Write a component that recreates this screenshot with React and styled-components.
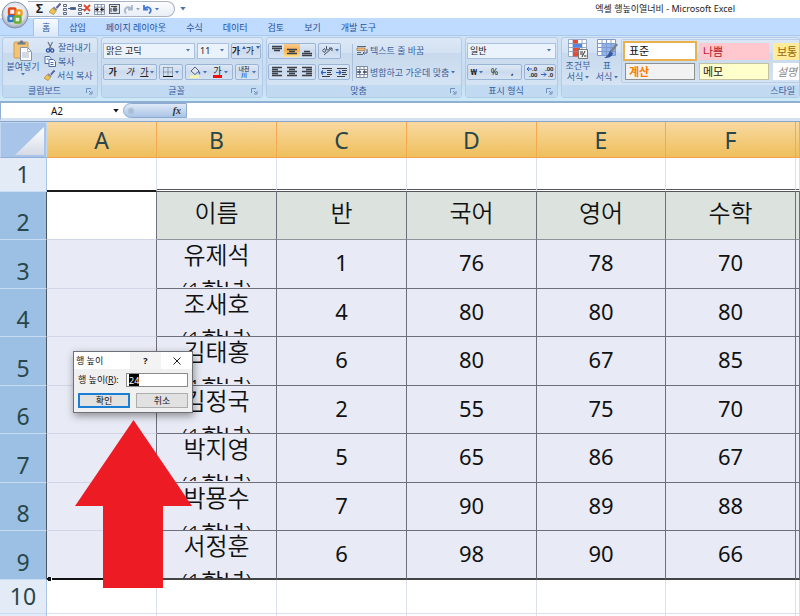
import React, { useEffect, useRef } from "react"
import styled, { createGlobalStyle } from "styled-components"

const GlobalStyle = createGlobalStyle`
  *{ box-sizing: border-box; }
  body{
    margin: 0;
    background: #fff;
    overflow: hidden;
    font-family: "Noto Sans", "Noto Sans CJK KR", sans-serif;
  }
  button, input, select{
    margin: 0;
    padding: 0;
    border: 0;
    background: none;
    font-family: inherit;
    color: inherit;
  }
`;

const Window = styled.div`
  display: flex;
  flex-direction: column;
  height: 100vh;
  font-size: 9px;
  line-height: 12px;
  color: #3a5f9c;
`;

/* title bar and quick access */
const TitleBar = styled.header`
  position: relative;
  display: flex;
  align-items: center;
  height: 18px;
  padding-left: 28px;
`;

const Orb = styled.button`
  position: absolute;
  left: 1px;
  top: 1px;
  width: 28px;
  height: 28px;
  z-index: 2;
  svg{ display: block; }
`;

const QuickAccess = styled.div`
  display: flex;
  align-items: center;
  gap: 2px;
  width: 147px;
  height: 16px;
  padding-left: 5px;
  background: linear-gradient(#fbfcfe, #e9eff7);
  border: 1px solid #a9b3c2;
  border-left: 0;
  border-radius: 0 8px 8px 0;
`;

const Title = styled.h1`
  flex: 1;
  margin: 0;
  padding-right: 65px;
  text-align: right;
  font-size: 9px;
  font-weight: 400;
  color: #222;
`;

const IconButton = styled.button`
  display: flex;
  align-items: center;
  justify-content: center;
  gap: 2px;
  flex: ${({ $grow }) => ($grow ? 1 : "none")};
  min-width: 13px;
  height: 13px;
  font-size: ${({ $large }) => ($large ? "12px" : "9px")};
  line-height: 12px;
  color: #222;
  background: ${({ $active }) => ($active ? "linear-gradient(#f9c98a, #f8b250 50%, #fde08a)" : "none")};
  svg{ display: block; flex: none; }
`;

const Customize = styled(IconButton)`
  margin-left: 1px;
`;

/* tabs */
const Tabs = styled.nav`
  display: flex;
  height: 18px;
  padding-left: 33px;
  background: #bfdbff;
  border-bottom: 1px solid #a8c8ee;
`;

const Tab = styled.button`
  height: 18px;
  padding: 0 ${({ $active }) => ($active ? "8px" : "10px")};
  font-size: 9px;
  color: #2a5096;
  border-radius: 2px 2px 0 0;
  background: ${({ $active }) => ($active ? "linear-gradient(#f6faff, #dbe8f7)" : "none")};
  border: solid ${({ $active }) => ($active ? "#a3c3ea" : "transparent")};
  border-width: ${({ $active }) => ($active ? "1px 1px 0" : "0")};
`;

/* ribbon */
const Ribbon = styled.section`
  display: flex;
  gap: 3px;
  height: 67px;
  padding: 1px 0 3px 2px;
  background: linear-gradient(#cfe2f6, #c5dcf3 70%, #cdeaf8);
  border-bottom: 2px solid #8fafd3;
`;

const GroupBox = styled.div`
  display: flex;
  flex-direction: column;
  flex: ${({ $width }) => ($width ? "none" : "1")};
  width: ${({ $width }) => ($width ? $width + "px" : "auto")};
  min-width: 0;
  overflow: hidden;
  border: 1px solid #b3cbe6;
  border-radius: 3px;
  background: linear-gradient(#dce8f6, #d3e1f2 25%, #c8d9ed 26%, #d9e8f6);
`;

const GroupBody = styled.div`
  display: flex;
  flex: 1;
  min-height: 0;
  gap: ${({ $gap }) => $gap || 0}px;
  padding: ${({ $pad }) => $pad || "2px 1px"};
`;

const GroupLabel = styled.div`
  display: flex;
  justify-content: center;
  align-items: center;
  height: 12px;
  padding-right: 4px;
  background: #c1d9f1;
  span{ flex: 1; text-align: ${({ $align }) => $align || "center"}; }
`;

const Stack = styled.div`
  display: flex;
  flex-direction: column;
  justify-content: space-around;
`;

const Line = styled.div`
  display: flex;
  gap: 2px;
`;

const BigButton = styled.button`
  display: flex;
  flex: none;
  flex-direction: column;
  align-items: center;
  width: ${({ $width }) => $width}px;
  font-size: 9px;
  line-height: 10px;
  color: #3a5f9c;
  svg{ display: block; flex: none; }
  span{ white-space: nowrap; display: flex; align-items: center; gap: 2px; margin-top: 1px; }
`;

const TextButton = styled.button`
  display: flex;
  align-items: center;
  gap: 2px;
  height: 15px;
  font-size: 9px;
  white-space: nowrap;
  color: #3a5f9c;
  svg{ flex: none; }
`;

const ButtonSet = styled.div`
  display: flex;
  align-items: center;
  width: ${({ $width }) => $width}px;
  height: 16px;
  border: 1px solid #9ab4d6;
  border-radius: 2px;
  background: linear-gradient(#dfe9f6, #cbdaee 50%, #d6e3f3);
`;

const SelectBox = styled.label`
  display: flex;
  align-items: center;
  width: ${({ $width }) => $width}px;
  height: 16px;
  padding: 0 4px 0 2px;
  border: 1px solid #abc1de;
  background: #eaf2fb;
  color: #222;
  select{ flex: 1; min-width: 0; appearance: none; font-size: 9px; line-height: 13px; }
  svg{ flex: none; }
`;

const Divider = styled.div`
  width: 1px;
  margin: 4px 3px 2px 2px;
  background: #a9c0dd;
`;

const Gallery = styled.div`
  display: grid;
  grid-template-columns: repeat(auto-fill, 74px);
  grid-template-rows: 20px 20px;
  grid-auto-flow: column;
  flex: 1;
  min-width: 225px;
  height: 44px;
  padding: 1px;
  border: 1px solid #b9cfe9;
  border-radius: 2px;
`;

const StyleCell = styled.button`
  display: flex;
  align-items: center;
  margin: ${({ $active }) => ($active ? "0" : "2px 2px 1px")};
  padding-left: ${({ $active }) => ($active ? "4px" : "3px")};
  font-size: 11px;
  line-height: 14px;
  color: ${({ $color }) => $color};
  background: ${({ $bg }) => $bg};
  font-weight: ${({ $bold }) => ($bold ? 700 : 400)};
  font-style: ${({ $italic }) => ($italic ? "italic" : "normal")};
  border: ${({ $active }) => ($active ? "2px" : "1px")} solid ${({ $line, $bg }) => $line || $bg};
`;

const FontColor = styled.span`
  line-height: 9px;
  border-bottom: 3px solid #ee1111;
`;

const Ruby = styled.span`
  display: flex;
  flex-direction: column;
  align-items: center;
  font-size: 6px;
  line-height: 6px;
  white-space: nowrap;
  em{ font-style: normal; font-weight: 700; color: #2c52c2; }
`;

/* formula bar */
const FormulaBar = styled.div`
  display: flex;
  height: 18px;
  background: #fff;
  border-bottom: 3px solid #d3e1f0;
  border-left: 1px solid #8fafd3;
`;

const NameBox = styled.label`
  display: flex;
  align-items: center;
  width: 122px;
  padding-right: 4px;
  color: #111;
  input{ flex: 1; min-width: 0; text-align: center; font-size: 10px; line-height: 14px; }
`;

const FxHandle = styled.button`
  width: 64px;
  padding-right: 5px;
  border: 1px solid #8eabcf;
  border-radius: 8px 0 0 8px;
  background: radial-gradient(circle at 7px 7px, #a9bdd6 2px, transparent 4px), linear-gradient(#dfe9f6, #a9c4e6);
  text-align: right;
  font: italic 700 10px/13px "Liberation Serif", serif;
  color: #333;
`;

const FormulaInput = styled.input`
  flex: 1;
  min-width: 0;
  font-size: 10px;
`;

/* sheet */
const SheetArea = styled.main`
  position: relative;
  flex: 1;
  min-height: 0;
  overflow: hidden;
  border-top: 1px solid #85a5cb;
`;

const Grid = styled.table`
  width: 100%;
  table-layout: fixed;
  border-collapse: separate;
  border-spacing: 0;
  th, td{ padding: 0; }
`;

const Col = styled.col`
  width: ${({ $width }) => ($width ? $width + "px" : "auto")};
`;

const Corner = styled.th`
  height: 36px;
  background: #a9c4e9;
  border: 1px solid #c3d6f0;
  border-bottom-color: #8fafd8;
  svg{ display: block; margin-left: auto; }
`;

const ColumnHead = styled.th`
  height: 36px;
  font-size: 23px;
  line-height: 32px;
  font-weight: 400;
  color: #29464a;
  background: linear-gradient(#f8d9a1, #efbf5c);
  border-right: 1px solid #f4a950;
  border-bottom: 1px solid #f4a24a;
`;

const RowHead = styled.th`
  vertical-align: bottom;
  font-size: 23px;
  line-height: 33px;
  font-weight: 400;
  color: #29464a;
  background: ${({ $selected }) => ($selected ? "#9cc0e4" : "#e3ebf7")};
  border-right: 1px solid ${({ $selected }) => ($selected ? "#4d5668" : "#a9c3e4")};
  border-bottom: 1px solid #c8dcf2;
`;

const Row = styled.tr`
  height: ${({ $height }) => $height}px;
`;

const BlankCell = styled.td`
  border-right: 1px solid #dcdff0;
  border-bottom: 1px solid #d8dfee;
`;

const TopEdge = styled.td`
  border-right: 1px solid #dcdff0;
  border-bottom: ${({ $heavy }) => ($heavy ? "2px solid #1c1a1c" : "3px double #55555c")};
`;

const DataCell = styled.td`
  vertical-align: top;
  text-align: center;
  font-size: 22px;
  line-height: 44px;
  color: #111;
  background: #e8ebf5;
  border-right: 1px solid #6d6f7a;
  border-bottom: ${({ $last }) => ($last ? "2px solid #444" : "1px solid #6d6f7a")};
`;

const SideCell = styled(DataCell)`
  background: ${({ $current }) => ($current ? "#fff" : "#e8ebf5")};
  border-bottom-color: ${({ $last }) => ($last ? "#111" : "#d0d5e8")};
`;

const SubjectCell = styled.th`
  vertical-align: top;
  font-size: 24px;
  line-height: 42px;
  font-weight: 350;
  color: #111;
  background: #dce3de;
  border-right: 1px solid #6d6f7a;
  border-bottom: 1px solid #8f9298;
`;

const Clip = styled.div`
  height: 47px;
  overflow: hidden;
  font-size: 24px;
  line-height: 30px;
  font-weight: 350;
`;

const Grade = styled.div`
  line-height: 42px;
`;

/* row height dialog */
const DialogBox = styled.form`
  position: absolute;
  left: 73px;
  top: 229px;
  width: 120px;
  background: #f0f0f0;
  border: 1px solid #6f7177;
  box-shadow: 1px 3px 8px rgba(0,0,0,0.4);
  color: #111;
`;

const DialogTitle = styled.div`
  display: flex;
  align-items: center;
  height: 17px;
  padding-left: 2px;
  background: #fff;
  span{ flex: 1; }
`;

const DialogTool = styled.button`
  display: flex;
  align-items: center;
  justify-content: center;
  width: 31px;
  height: 17px;
  font-size: 9px;
  font-weight: 700;
  background: ${({ $shade }) => ($shade ? "#f3f3f3" : "#fff")};
`;

const Field = styled.label`
  display: flex;
  align-items: center;
  justify-content: space-between;
  padding: 4px 4px 0;
  white-space: nowrap;
  input{
    width: 62px;
    height: 14px;
    padding-left: 2px;
    border: 1px solid #8b8b8b;
    background: #fff;
    font-size: 9px;
    outline: 0;
  }
  input::selection{ background: #000; color: #fff; }
`;

const Actions = styled.div`
  display: grid;
  grid-template-columns: 1fr 1fr;
  gap: 6px;
  padding: 6px 4px 4px;
`;

const ActionButton = styled.button`
  height: 15px;
  font-size: 9px;
  line-height: 11px;
  background: #e1e1e1;
  border: ${({ $primary }) => ($primary ? "2px solid #1c7fd6" : "1px solid #adadad")};
`;

const Arrow = styled.svg`
  position: absolute;
  left: 75px;
  top: 298px;
`;

const Handle = styled.span`
  position: absolute;
  left: 48px;
  top: 455px;
  width: 4px;
  height: 4px;
  background: #111;
  border: solid #fff;
  border-width: 0 1px 0 0;
`;

const Caret = ({ color = "#4a72b0", big }) => (
  <svg width={big ? 6 : 4} height={big ? 4 : 3} viewBox="0 0 4 3"><path d="M0 0h4L2 2.6z" fill={color} /></svg>
)

const SizeMark = ({ down }) => (
  <svg width="4" height="12" viewBox="0 0 4 12"><path d={down ? "M0 1h4L2 4z" : "M0 4h4L2 1z"} fill="#3465b8" /></svg>
)

const Launcher = () => (
  <svg width="7" height="7" viewBox="0 0 7 7"><path d="M.5 5V.5H5M3 3l2.5 2.5M6 3v3H3" fill="none" stroke="#6f8fbd" /></svg>
)

const Brush = ({ size = 12 }) => (
  <svg width={size} height={size} viewBox="0 0 12 12">
    <path d="M11.5.5L7.5 5" stroke="#5b5fa0" strokeWidth="2" />
    <path d="M5 3.5l3.5 3L7 8 3.5 5z" fill="#8f8a9c" />
    <path d="M3.5 5L7 8.5 4.5 11.5 0 9z" fill="#eec64e" stroke="#9a7524" strokeWidth=".6" />
  </svg>
)

const OfficeLogo = () => (
  <svg width="28" height="28" viewBox="0 0 28 28">
    <defs>
      <radialGradient id="orb" cx="50%" cy="40%" r="60%">
        <stop offset="0" stopColor="#fff" /><stop offset=".65" stopColor="#dfe3ea" /><stop offset="1" stopColor="#98a3b5" />
      </radialGradient>
    </defs>
    <circle cx="14" cy="14" r="13" fill="url(#orb)" stroke="#8492a8" />
    <g fill="none" strokeWidth="2.4">
      <rect x="8" y="7.5" width="6.5" height="6.5" rx="1" stroke="#e0491c" />
      <rect x="15.5" y="9.5" width="5" height="5" rx="1" stroke="#f2a01e" />
      <rect x="7.5" y="15" width="5" height="5" rx="1" stroke="#2f76c4" />
      <rect x="13.5" y="15.5" width="6" height="6" rx="1" stroke="#6cae2e" />
    </g>
  </svg>
)

const Clipboard = () => (
  <svg width="20" height="21" viewBox="0 0 20 21">
    <rect x="1" y="2" width="14" height="16" rx="1" fill="#f2c473" stroke="#d09c4c" />
    <path d="M4.5 4.5V2.5h2l1-2h2l1 2h2v2z" fill="#6f7a8c" />
    <path d="M7.5 7.5h7l4 4v9h-11z" fill="#fdfdff" stroke="#8895ac" />
    <path d="M14.5 7.5v4h4M9 13h7M9 15h7M9 17h7" fill="none" stroke="#aab5c8" />
  </svg>
)

const Scissors = () => (
  <svg width="12" height="12" viewBox="0 0 12 12" fill="none">
    <path d="M4 1l3.5 7M8.5 1L5 8" stroke="#6c7688" strokeWidth="1.2" />
    <circle cx="4" cy="9.5" r="1.6" stroke="#2d50a0" strokeWidth="1.3" /><circle cx="8.2" cy="9.5" r="1.6" stroke="#2d50a0" strokeWidth="1.3" />
  </svg>
)

const Pages = () => (
  <svg width="12" height="12" viewBox="0 0 12 12" fill="#fff" stroke="#4b6ba8">
    <path d="M1 1.5h4.5l1.5 2v5H1z" /><path d="M5 4.5h4.5l2 2v5H5z" /><path d="M6.5 7.5h3M6.5 9.5h3M2.5 4h2" />
  </svg>
)

const MergeCells = ({ size = 10, color }) => (
  <svg width={size} height={size} viewBox="0 0 12 12" fill="none">
    <path d="M.5.5h11v11H.5zM.5 3.5h11M.5 8.5h11M4 .5v3M8 .5v3M4 8.5v3M8 8.5v3" fill="#fff" stroke="#7d8ba5" />
    <path d="M1 6h3M11 6H8M3 4.5L4.5 6 3 7.5M9 4.5L7.5 6 9 7.5" stroke={color} strokeWidth="1.4" />
  </svg>
)

const RowInsert = () => (
  <svg width="13" height="11" viewBox="0 0 13 11" fill="none" stroke="#5d6a80">
    <path d="M.5.5h3v2h-3zM.5 4.5h3v2h-3zM.5 8.5h3v2h-3z" /><path d="M5 4.5h2" stroke="#345fa8" /><path d="M7.5 3.5h5v2h-5z" fill="#345fa8" />
  </svg>
)

const RowDelete = () => (
  <svg width="13" height="11" viewBox="0 0 13 11" fill="none" stroke="#5d6a80">
    <path d="M.5.5h3v2h-3zM.5 4.5h3v2h-3zM.5 8.5h3v2h-3zM4 5.5h3M8 9.5h3" /><path d="M6 1l6 6M12 1L6 7" stroke="#e2452a" strokeWidth="1.8" />
  </svg>
)

const Camera = () => (
  <svg width="11" height="10" viewBox="0 0 11 10">
    <rect x=".5" y=".5" width="10" height="9" fill="#dfe3ea" stroke="#555e70" /><circle cx="6" cy="5.5" r="2.3" fill="#59616f" /><path d="M2 2.5h6M2 4v4" stroke="#444" />
  </svg>
)

const Turn = ({ redo }) => (
  <svg width="11" height="11" viewBox="0 0 11 11" fill="none" stroke={redo ? "#a9b6cb" : "#3f78d8"} strokeWidth="1.8">
    {redo ? <path d="M3 9.5C0 5 4 1.5 8 4.5M9 1v4.5H5" /> : <path d="M7 9.5C11 6 7 1 2.5 4.5M2 1v4.5h4" />}
  </svg>
)

const bars = {
  top: "M1 1.5h10M1 3.5h10M3 5.5h6",
  middle: "M1 4.5h10M3 6.5h6M1 8.5h10",
  bottom: "M3 6.5h6M1 8.5h10M1 10.5h10",
  left: "M1 1.5h10M1 3.5h6M1 5.5h10M1 7.5h6M1 9.5h10",
  center: "M1 1.5h10M3 3.5h6M1 5.5h10M3 7.5h6M1 9.5h10",
  right: "M1 1.5h10M5 3.5h6M1 5.5h10M5 7.5h6M1 9.5h10",
}

const Bars = ({ kind }) => (
  <svg width="12" height="12" viewBox="0 0 12 12"><path d={bars[kind]} stroke="#3b3f48" strokeWidth="1.4" /></svg>
)

const Indent = ({ out }) => (
  <svg width="12" height="11" viewBox="0 0 12 11" fill="none">
    <path d="M1 1.5h10M6 3.5h5M6 5.5h4M6 7.5h5M1 9.5h8" stroke="#3b3f48" strokeWidth="1.2" />
    <path d={out ? "M5 5.5H0M2 3.5l-2 2 2 2" : "M0 5.5h5M3 3.5l2 2-2 2"} stroke="#2c62c2" strokeWidth="1.2" />
  </svg>
)

const Slanted = () => (
  <svg width="12" height="11" viewBox="0 0 12 11" fill="none" stroke="#4c5468">
    <path d="M3 10L11 3M11 6V3H8" /><path d="M1.5 5.5l2-2L5 6 3 7.5zM5.5 1v3.5l2 .5L9 3" />
  </svg>
)

const Wrap = () => (
  <svg width="12" height="11" viewBox="0 0 12 11" fill="none">
    <path d="M1 1.5h9M1 9.5h6M1 7.5h4" stroke="#5c6679" /><path d="M1 3h8v2.5H1z" fill="#f3c08a" stroke="#a56c36" strokeWidth=".7" /><path d="M11 4v4H7M8.5 6.5L7 8l1.5 1.5" stroke="#4f5f80" />
  </svg>
)

const Borders = () => (
  <svg width="10" height="10" viewBox="0 0 10 10" fill="none" stroke="#5b6880">
    <path d="M.5.5h9M.5 5h9M.5.5v9M5 .5v9M9.5.5v9" strokeDasharray="1 1" /><path d="M0 9.5h10" stroke="#111" />
  </svg>
)

const Bucket = () => (
  <svg width="12" height="12" viewBox="0 0 12 12">
    <path d="M2 5l4-4 4 4-4 3.5z" fill="#dfe6f0" stroke="#56617a" /><path d="M9.5 5q2.5 1 1.5 3.5Q9 8 9.5 5z" fill="#3f6dc0" /><path d="M1 9.5h9V12H1z" fill="#f7f5a8" />
  </svg>
)

const Decimals = ({ less }) => (
  <svg width="13" height="12" viewBox="0 0 13 12">
    <text x={less ? 4 : 6} y="5" fontSize="6" fontWeight="700" fill="#333">{less ? ".00" : ".0"}</text>
    <text x={less ? 7 : 3} y="11" fontSize="6" fontWeight="700" fill="#333">{less ? ".0" : ".00"}</text>
    <path d={less ? "M0 8.5h5M3 6.5l2 2-2 2" : "M6 3H1M3 1L1 3l2 2"} fill="none" stroke="#2c62c2" />
  </svg>
)

const Conditional = () => (
  <svg width="21" height="21" viewBox="0 0 21 21">
    <path d="M.5.5h18v17H.5zM.5 4.5h18M.5 8.5h18M.5 12.5h18M5 .5v17M14 .5v17" fill="#fff" stroke="#97a9c8" />
    <path d="M5 1h5v3.5H5zM5 13h5v4.5H5z" fill="#e64b35" /><path d="M5 5h9v3.5H5z" fill="#5a85dc" /><path d="M5 9h7v3.5H5z" fill="#e64b35" />
    <path d="M10.5 10.5h9v9h-9z" fill="#f2f2f2" stroke="#777" /><path d="M12 13h3M12 15h3M17 12l-3 6M16 17h2.5" stroke="#333" />
  </svg>
)

const TableBrush = () => (
  <svg width="21" height="21" viewBox="0 0 21 21">
    <path d="M.5.5h18v16H.5z" fill="#fff" /><path d="M5 5h13.5v11.5H5z" fill="#8fb4ee" />
    <path d="M.5.5h18v16H.5zM.5 4.5h18M.5 8.5h18M.5 12.5h18M5 .5v16M9.5.5v16M14 .5v16" fill="none" stroke="#7f9acb" />
    <path d="M20 5l-7 9" stroke="#7c7f8a" strokeWidth="2.5" /><path d="M13 12l3 2.5q-2 5-9 4.5 4-2 6-7z" fill="#35589e" />
  </svg>
)

const Group = ({ label, width, align, launcher = true, gap, pad, children }) => (
  <GroupBox $width={width}>
    <GroupBody $gap={gap} $pad={pad}>{children}</GroupBody>
    <GroupLabel $align={align}><span>{label}</span>{launcher && <Launcher />}</GroupLabel>
  </GroupBox>
)

const tabs = ["홈", "삽입", "페이지 레이아웃", "수식", "데이터", "검토", "보기", "개발 도구"]

const cellStyles = [
  { name: "표준", color: "#111", bg: "#fff", line: "#eab04e", active: true },
  { name: "계산", color: "#fa7d00", bg: "#f2f2f2", line: "#8f8f8f", bold: true },
  { name: "나쁨", color: "#b0122c", bg: "#ffc7ce" },
  { name: "메모", color: "#222", bg: "#ffffcc", line: "#c3c3a4" },
  { name: "보통", color: "#9c6500", bg: "#ffeb9c" },
  { name: "설명", color: "#8a8a8a", bg: "#fff", italic: true },
]

const columns = ["A", "B", "C", "D", "E", "F"]
const widths = [47, 110, 120, 130, 130, 129, 130, 0]
const subjects = ["이름", "반", "국어", "영어", "수학"]

const students = [
  ["유제석", 1, 76, 78, 70],
  ["조새호", 4, 80, 80, 80],
  ["김태홍", 6, 80, 67, 85],
  ["김정국", 2, 55, 75, 70],
  ["박지영", 5, 65, 86, 67],
  ["박묭수", 7, 90, 89, 88],
  ["서정훈", 6, 98, 90, 66],
]

const RibbonBar = () => (
  <Ribbon>
    <Group label="클립보드" width={96} gap={4} pad="2px 3px">
      <BigButton $width={34}><Clipboard /><span>붙여넣기</span><span><Caret /></span></BigButton>
      <Stack>
        <TextButton><Scissors />잘라내기</TextButton>
        <TextButton><Pages />복사</TextButton>
        <TextButton><Brush size={11} />서식 복사</TextButton>
      </Stack>
    </Group>
    <Group label="글꼴" width={162}>
      <Stack>
        <Line>
          <SelectBox $width={92}><select aria-label="글꼴"><option>맑은 고딕</option></select><Caret /></SelectBox>
          <SelectBox $width={32}><select aria-label="글꼴 크기"><option>11</option></select><Caret /></SelectBox>
          <ButtonSet $width={30}>
            <IconButton $grow><b>가</b><SizeMark /></IconButton>
            <IconButton $grow>가<SizeMark down /></IconButton>
          </ButtonSet>
        </Line>
        <Line>
          <ButtonSet $width={54}>
            <IconButton $grow><b>가</b></IconButton>
            <IconButton $grow><i>가</i></IconButton>
            <IconButton $grow><u>가</u><Caret /></IconButton>
          </ButtonSet>
          <ButtonSet $width={24}><IconButton $grow><Borders /><Caret /></IconButton></ButtonSet>
          <ButtonSet $width={48}>
            <IconButton $grow><Bucket /><Caret /></IconButton>
            <IconButton $grow><FontColor>가</FontColor><Caret /></IconButton>
          </ButtonSet>
          <ButtonSet $width={24}><IconButton $grow><Ruby>내천<em>川</em></Ruby><Caret /></IconButton></ButtonSet>
        </Line>
      </Stack>
    </Group>
    <Group label="맞춤" width={196}>
      <Stack>
        <Line>
          <ButtonSet $width={48}>
            <IconButton $grow><Bars kind="top" /></IconButton>
            <IconButton $grow $active><Bars kind="middle" /></IconButton>
            <IconButton $grow><Bars kind="bottom" /></IconButton>
          </ButtonSet>
          <ButtonSet $width={23}><IconButton $grow><Slanted /><Caret /></IconButton></ButtonSet>
        </Line>
        <Line>
          <ButtonSet $width={48}>
            <IconButton $grow><Bars kind="left" /></IconButton>
            <IconButton $grow><Bars kind="center" /></IconButton>
            <IconButton $grow><Bars kind="right" /></IconButton>
          </ButtonSet>
          <ButtonSet $width={32}>
            <IconButton $grow><Indent out /></IconButton>
            <IconButton $grow><Indent /></IconButton>
          </ButtonSet>
        </Line>
      </Stack>
      <Divider />
      <Stack>
        <TextButton><Wrap />텍스트 줄 바꿈</TextButton>
        <TextButton><MergeCells size={12} color="#4a5568" />병합하고 가운데 맞춤<Caret /></TextButton>
      </Stack>
    </Group>
    <Group label="표시 형식" width={93}>
      <Stack>
        <SelectBox $width={89}><select aria-label="표시 형식"><option>일반</option></select><Caret /></SelectBox>
        <Line>
          <ButtonSet $width={55}>
            <IconButton $grow><b>₩</b><Caret /></IconButton>
            <IconButton $grow>%</IconButton>
            <IconButton $grow><b>,</b></IconButton>
          </ButtonSet>
          <ButtonSet $width={32}>
            <IconButton $grow><Decimals /></IconButton>
            <IconButton $grow><Decimals less /></IconButton>
          </ButtonSet>
        </Line>
      </Stack>
    </Group>
    <Group label="스타일" align="right" launcher={false} pad="1px 0 1px 1px">
      <BigButton $width={30}><Conditional /><span>조건부</span><span>서식 <Caret /></span></BigButton>
      <BigButton $width={28}><TableBrush /><span>표</span><span>서식 <Caret /></span></BigButton>
      <Gallery>
        {cellStyles.map(s => (
          <StyleCell key={s.name} $color={s.color} $bg={s.bg} $line={s.line} $bold={s.bold} $italic={s.italic} $active={s.active}>
            {s.name}
          </StyleCell>
        ))}
      </Gallery>
    </Group>
  </Ribbon>
)

const RowHeightDialog = () => {
  const input = useRef(null)
  useEffect(() => {
    input.current.focus()
    input.current.select()
  }, [])
  return (
    <DialogBox role="dialog" aria-label="행 높이" onSubmit={e => e.preventDefault()}>
      <DialogTitle>
        <span>행 높이</span>
        <DialogTool type="button" $shade>?</DialogTool>
        <DialogTool type="button" aria-label="닫기">
          <svg width="8" height="8" viewBox="0 0 8 8"><path d="M.5.5l7 7M7.5.5l-7 7" stroke="#222" /></svg>
        </DialogTool>
      </DialogTitle>
      <Field><span>행 높이(<u>R</u>):</span><input ref={input} defaultValue="24" /></Field>
      <Actions>
        <ActionButton $primary>확인</ActionButton>
        <ActionButton type="button">취소</ActionButton>
      </Actions>
    </DialogBox>
  )
}

const Sheet = () => (
  <Grid>
    <colgroup>{widths.map((w, i) => <Col key={i} $width={w} />)}</colgroup>
    <thead>
      <tr>
        <Corner>
          <svg width="31" height="32" viewBox="0 0 31 32">
            <defs><linearGradient id="corner" x2="0" y2="1"><stop offset="0" stopColor="#fff" /><stop offset="1" stopColor="#d5dae6" /></linearGradient></defs>
            <path d="M29 3v28H0z" fill="url(#corner)" />
          </svg>
        </Corner>
        {columns.map(c => <ColumnHead key={c}>{c}</ColumnHead>)}
        <ColumnHead />
      </tr>
    </thead>
    <tbody>
      <Row $height={34}>
        <RowHead>1</RowHead>
        <TopEdge $heavy />
        {columns.map(c => <TopEdge key={c} />)}
      </Row>
      <Row $height={48}>
        <RowHead $selected>2</RowHead>
        <SideCell $current />
        {subjects.map(s => <SubjectCell key={s}>{s}</SubjectCell>)}
        <SubjectCell />
      </Row>
      {students.map(([name, ...scores], i) => {
        const last = i === students.length - 1
        return (
          <Row key={name} $height={i % 2 ? 48 : 49}>
            <RowHead $selected>{i + 3}</RowHead>
            <SideCell $last={last} />
            <DataCell $last={last}><Clip>{name}<Grade>(1학년)</Grade></Clip></DataCell>
            {scores.map((n, j) => <DataCell key={j} $last={last}>{n}</DataCell>)}
            <DataCell $last={last} />
          </Row>
        )
      })}
      <Row $height={33}>
        <RowHead>10</RowHead>
        {widths.slice(1).map((w, i) => <BlankCell key={i} />)}
      </Row>
      <Row $height={33}>
        <RowHead />
        {widths.slice(1).map((w, i) => <BlankCell key={i} />)}
      </Row>
    </tbody>
  </Grid>
)

const App = () => (
  <Window>
    <GlobalStyle />
    <TitleBar>
      <Orb aria-label="Office"><OfficeLogo /></Orb>
      <QuickAccess>
        <IconButton $large><b>Σ</b></IconButton>
        <IconButton><Brush /></IconButton>
        <IconButton><RowInsert /></IconButton>
        <IconButton><RowDelete /></IconButton>
        <IconButton><MergeCells size={11} color="#222" /></IconButton>
        <IconButton><Camera /></IconButton>
        <IconButton><Turn redo /><Caret color="#9aa6b8" /></IconButton>
        <IconButton><Turn /><Caret /></IconButton>
      </QuickAccess>
      <Customize><Caret big /></Customize>
      <Title>엑셀 행높이열너비 - Microsoft Excel</Title>
    </TitleBar>
    <Tabs>
      {tabs.map((t, i) => <Tab key={t} $active={i === 0}>{t}</Tab>)}
    </Tabs>
    <RibbonBar />
    <FormulaBar>
      <NameBox><input aria-label="이름 상자" defaultValue="A2" /><Caret color="#111" big /></NameBox>
      <FxHandle>fx</FxHandle>
      <FormulaInput aria-label="수식 입력줄" />
    </FormulaBar>
    <SheetArea>
      <Sheet />
      <Handle />
      <RowHeightDialog />
      <Arrow width="117" height="168" viewBox="0 0 117 168">
        <path d="M58.5 0L117 86H88v82H28V86H0z" fill="#ed1c24" />
      </Arrow>
    </SheetArea>
  </Window>
)

export default App
